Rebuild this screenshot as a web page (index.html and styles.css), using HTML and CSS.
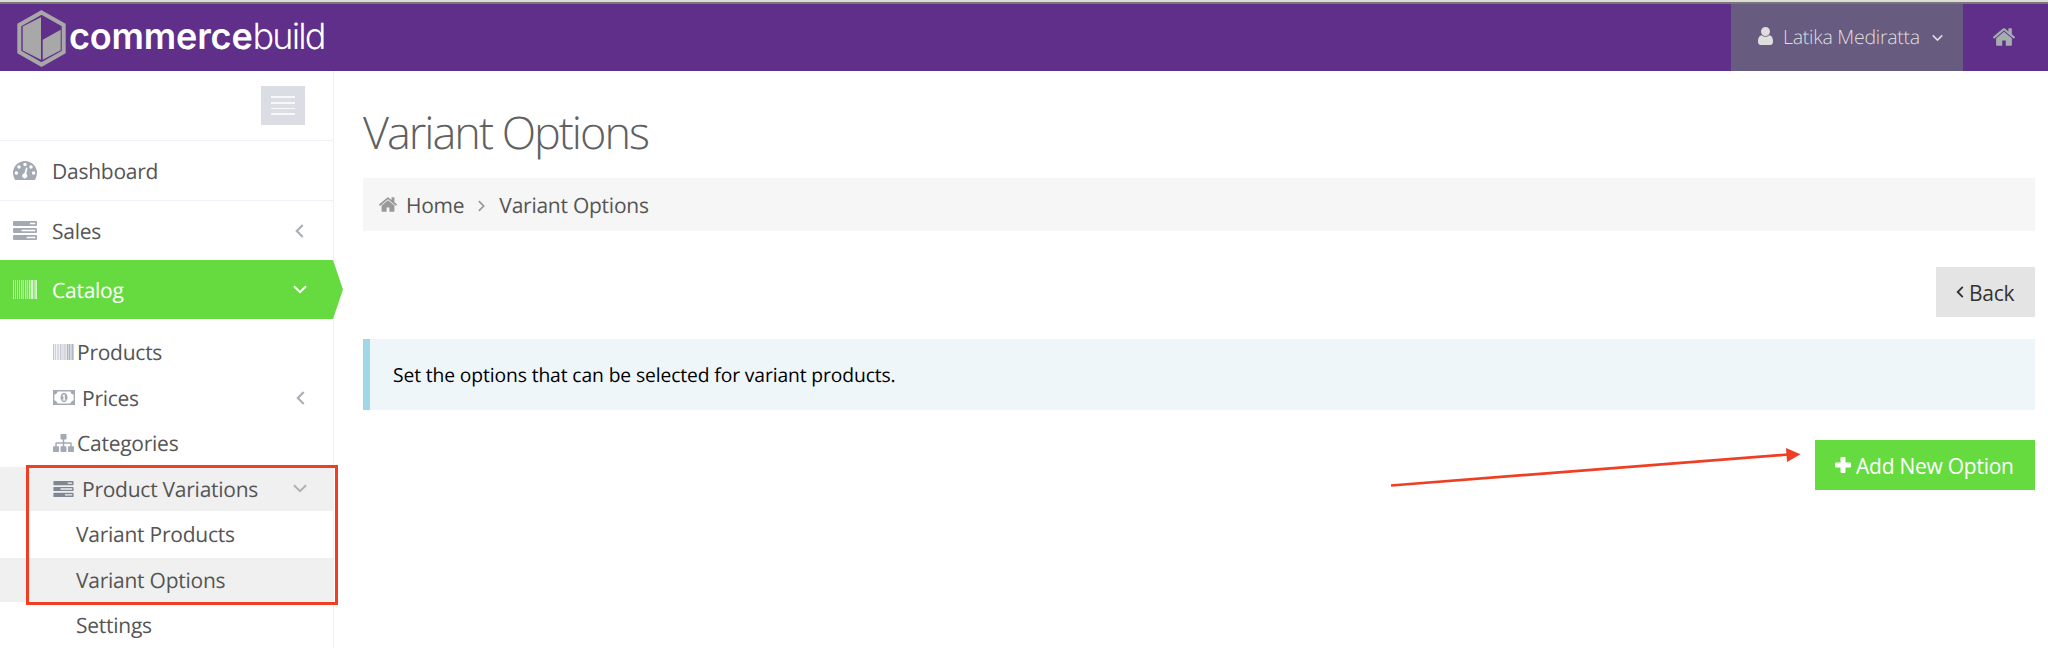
FILE: index.html
```
<!DOCTYPE html>
<html lang="en">
<head>
<meta charset="utf-8">
<title>Variant Options</title>
<link rel="stylesheet" href="styles.css">
</head>
<body>
<svg class="defs" width="0" height="0">
  <symbol id="home" viewBox="26 253 1612 1283"><path d="M1408 992v480q0 26-19 45t-45 19h-384v-384h-256v384h-384q-26 0-45-19t-19-45v-480q0-1 .5-3t.5-3l575-474 575 474q1 2 1 6zm223-69l-62 74q-8 9-21 11h-3q-13 0-21-7l-692-577-692 577q-12 8-24 7-13-2-21-11l-62-74q-8-10-7-23.500t11-21.500l719-599q32-26 76-26t76 26l244 204v-195q0-14 9-23t23-9h192q14 0 23 9t9 23v408l219 182q10 8 11 21.500t-7 23.500z"/></symbol>
  <symbol id="user" viewBox="256 128 1280 1536"><path d="M1536 1399q0 109-62.500 187t-150.500 78h-854q-88 0-150.500-78t-62.500-187q0-85 8.500-160.500t31.500-152 58.500-131 94-89 134.500-34.500q131 128 313 128t313-128q76 0 134.500 34.500t94 89 58.500 131 31.500 152 8.500 160.500zm-256-887q0 159-112.500 271.500t-271.500 112.500-271.500-112.500-112.500-271.500 112.500-271.500 271.500-112.500 271.500 112.500 112.500 271.500z"/></symbol>
  <symbol id="tasks" viewBox="0 0 24 19"><path fill-rule="evenodd" d="M1 0h22q1 0 1 1v3q0 1-1 1H1q-1 0-1-1V1q0-1 1-1zM17 1.700v1.600h5.300V1.700zM1 7h22q1 0 1 1v3q0 1-1 1H1q-1 0-1-1V8q0-1 1-1zM8.500 8.700v1.600h13.800V8.700zM1 14h22q1 0 1 1v3q0 1-1 1H1q-1 0-1-1v-3q0-1 1-1zM13.700 15.700v1.600h8.600v-1.600z"/></symbol>
  <symbol id="barcode" viewBox="0 0 24 19"><path d="M0 0h1v19H0zM2 0h.6v19H2z"/><path opacity=".7" d="M4 0h1v19H4zM6 0h1v19H6zM8 0h1.400v19H8zM10 0h.8v19h-.8zM12 0h1.400v19H12zM14.200 0h1v19h-1z"/><path opacity=".9" d="M16 0h1.400v19H16zM18 0h2v19h-2zM20.600 0h1v19h-1zM22.200 0H24v19h-1.800z"/></symbol>
  <symbol id="gauge" viewBox="0 0 24 19"><path fill-rule="evenodd" d="M12 0a12 12 0 0 1 12 12q0 3.500-1.800 6.500-.3.500-.9.500H2.700q-.6 0-.9-.5Q0 15.500 0 12A12 12 0 0 1 12 0zM3.400 10.300a1.700 1.700 0 1 0 0 3.400 1.700 1.700 0 0 0 0-3.400zM6 4.300a1.700 1.700 0 1 0 0 3.400 1.700 1.700 0 0 0 0-3.400zM12 1.800a1.700 1.700 0 1 0 0 3.400 1.700 1.700 0 0 0 0-3.400zM18 4.300a1.700 1.700 0 1 0 0 3.400 1.700 1.700 0 0 0 0-3.400zM20.600 10.300a1.700 1.700 0 1 0 0 3.400 1.700 1.700 0 0 0 0-3.400zM13 6.800L11.400 12.200A2.600 2.600 0 1 0 13.300 12.700L14.500 7.200Q14.200 6.200 13 6.800z"/></symbol>
  <symbol id="money" viewBox="0 0 22 15"><path fill-rule="evenodd" d="M0 0h22v15H0zM4.400 1.400Q4.200 4.200 1.400 4.600v5.800q2.800.4 3 3.200h13.200q.2-2.800 3-3.200V4.600q-2.800-.4-3-3.200z"/><path fill-rule="evenodd" d="M11 2.800c2.300 0 3.500 2.200 3.500 4.700s-1.200 4.700-3.500 4.700-3.500-2.200-3.500-4.700S8.700 2.800 11 2.800zM10.700 4.400L9.200 5.700l.6.700.6-.4v3.500h-1v1h3.300v-1h-.9V4.400z"/></symbol>
  <symbol id="sitemap" viewBox="0 0 21 18"><path d="M8.300 0h4.400q.8 0 .8.800v3.900q0 .8-.8.800h-1.400v2.800h6.400q1 0 1 1v2.900h1.500q.8 0 .8.800v4.200q0 .8-.8.800h-4.400q-.8 0-.8-.8V13q0-.8.800-.8h1.500V9.700h-6v2.500h1.400q.8 0 .8.800v4.200q0 .8-.8.800H8.300q-.8 0-.8-.8V13q0-.8.8-.8h1.400V9.700h-6v2.500h1.500q.8 0 .8.800v4.200q0 .8-.8.800H.8q-.8 0-.8-.8V13q0-.8.8-.8h1.500V9.300q0-1 1-1h6.400V5.500H8.300q-.8 0-.8-.8V.8q0-.8.8-.8z"/></symbol>
  <symbol id="left" viewBox="0 0 8 13"><path class="line" d="M7 1L1.500 6.500 7 12"/></symbol>
  <symbol id="right" viewBox="0 0 8 13"><path class="line" d="M1 1l5.500 5.500L1 12"/></symbol>
  <symbol id="down" viewBox="0 0 14 9"><path class="line" d="M1 1.200l6 6 6-6"/></symbol>
  <symbol id="plus" viewBox="0 0 16 16"><path d="M6.500 0h3q1 0 1 1v4.500H15q1 0 1 1v3q0 1-1 1h-4.500V15q0 1-1 1h-3q-1 0-1-1v-4.500H1q-1 0-1-1v-3q0-1 1-1h4.500V1q0-1 1-1z"/></symbol>
</svg>

<header class="topbar">
  <a class="brand">
    <svg class="brand-mark" viewBox="0 0 49 57"><path class="brand-frame" d="M24.500 2.400L46.700 15v27L24.500 54.600 2.300 42V15z"/><path d="M5.700 16.500L24 7.200v42.600L5.700 40.500zM25.700 29.800l18-10v20.400l-18 9.600z"/></svg>
    <span class="brand-text"><b>commerce</b><span>build</span></span>
  </a>
  <div class="user">
    <svg class="user-icon"><use href="#user"/></svg>
    <span class="user-name">Latika Mediratta</span>
    <svg class="user-caret"><use href="#down"/></svg>
  </div>
  <a class="home-link"><svg><use href="#home"/></svg></a>
</header>

<div class="page">
  <nav class="sidebar">
    <div class="toggle-row"><button class="toggle"><i></i><i></i><i></i><i></i></button></div>
    <a class="item"><svg class="icon"><use href="#gauge"/></svg><span>Dashboard</span></a>
    <a class="item"><svg class="icon"><use href="#tasks"/></svg><span>Sales</span><svg class="arrow-left"><use href="#left"/></svg></a>
    <a class="item active"><svg class="icon"><use href="#barcode"/></svg><span>Catalog</span><svg class="arrow-down"><use href="#down"/></svg></a>
    <div class="submenu">
      <a class="sub tight"><svg class="icon barcode"><use href="#barcode"/></svg><span>Products</span></a>
      <a class="sub"><svg class="icon money"><use href="#money"/></svg><span>Prices</span><svg class="arrow-left"><use href="#left"/></svg></a>
      <a class="sub tight"><svg class="icon sitemap"><use href="#sitemap"/></svg><span>Categories</span></a>
      <a class="sub open"><svg class="icon"><use href="#tasks"/></svg><span>Product Variations</span><svg class="arrow-down"><use href="#down"/></svg></a>
      <a class="sub leaf"><span>Variant Products</span></a>
      <a class="sub leaf open"><span>Variant Options</span></a>
      <a class="sub leaf"><span>Settings</span></a>
    </div>
  </nav>
  <main class="content">
    <h1>Variant Options</h1>
    <div class="crumbs"><svg class="crumb-home"><use href="#home"/></svg><span>Home</span><svg class="crumb-sep"><use href="#right"/></svg><span>Variant Options</span></div>
    <div class="actions"><button class="btn back"><svg><use href="#left"/></svg><span>Back</span></button></div>
    <div class="note"><span>Set the options that can be selected for variant products.</span></div>
    <div class="actions"><button class="btn add"><svg><use href="#plus"/></svg><span>Add New Option</span></button></div>
  </main>
</div>

<div class="highlight"></div>
<svg class="pointer" viewBox="0 0 412 42"><path class="pointer-line" d="M1 37.500L398 6.500"/><path d="M396 0l14.500 6.200L397 14z"/></svg>
</body>
</html>
```
FILE: styles.css
```
* { box-sizing: border-box; }
body {
  margin: 0;
  height: 648px;
  overflow: hidden;
  position: relative;
  background: #fff;
  color: #555;
  font: 21px/28px "Open Sans", "Noto Sans", sans-serif;
  letter-spacing: -.25px;
  text-rendering: geometricPrecision;
}
svg { display: block; fill: currentColor; flex: none; }
.defs { position: absolute; }
.line { fill: none; stroke: currentColor; stroke-width: 2; }
span { white-space: nowrap; }
button { border: 0; padding: 0; font: inherit; letter-spacing: inherit; color: inherit; }

.topbar {
  display: flex;
  height: 71px;
  border-top: 4px solid #777;
  background: #5f2f8a;
  border-image: linear-gradient(#dcdcd8 0 1.500px, #777 2px) 4 0 0 0;
}
.brand { display: flex; padding: 6px 0 0 17px; color: #a8a8a8; }
.brand-mark { width: 49px; height: 57px; }
.brand-frame { fill: none; stroke: currentColor; stroke-width: 4; }
.brand-text { display: flex; margin: 1px 0 0 3px; color: #fff; font: 36px/50px Inter, sans-serif; }
.brand-text b { font-weight: 600; letter-spacing: -.15px; }
.brand-text span { font-weight: 300; letter-spacing: -1.900px; }
.user {
  display: flex;
  align-items: center;
  width: 232px;
  margin-left: auto;
  padding: 0 0 0 27px;
  background: #675b80;
  color: #dedede;
}
.user-icon { width: 15px; height: 18px; margin-bottom: 3px; }
.user-name { margin: 0 0 1px 10px; font-size: 19.500px; font-weight: 340; letter-spacing: -.25px; }
.user-caret { width: 11px; height: 8px; margin-left: 12px; }
.home-link { width: 85px; padding: 24px 0 0 30px; color: #a4adb0; }
.home-link svg { width: 22px; height: 18px; }

.page { display: flex; height: 577px; }
.sidebar { width: 334px; border-right: 1px solid #eff0f7; }
.toggle-row { display: flex; justify-content: flex-end; height: 70px; padding: 15px 28px 0 0; border-bottom: 1px solid #eef1f5; }
.toggle { display: flex; flex-direction: column; gap: 4px; width: 44px; height: 39px; padding: 10px; background: #dadde4; }
.toggle i { height: 2px; background: #f7f8fa; }
.item { display: flex; align-items: center; height: 60px; padding: 0 26px 0 13px; border-bottom: 1px solid #eef1f5; }
.item span, .sub span, .crumbs span, .btn span { padding-top: 2px; }
.item:nth-child(3) { height: 59px; border: 0; }
.item .icon { width: 24px; height: 19px; margin-right: 15px; }
.icon { color: #a3aab4; }
.arrow-left { width: 9px; height: 14px; margin: 0 3px 0 auto; color: #a9afb8; }
.arrow-down { width: 14px; height: 9px; margin-left: auto; color: #b0b0b0; }
.item.active {
  width: 343px;
  height: 59px;
  padding-right: 36px;
  border: 0;
  background: #66db40;
  color: #fff;
  clip-path: polygon(0 0, 333px 0, 343px 50%, 333px 100%, 0 100%);
}
.item.active .icon { color: #dff6d8; }
.item.active .arrow-down { color: #fff; }
.submenu { display: flex; flex-direction: column; gap: 1.500px; padding-top: 11px; }
.sub { display: flex; align-items: center; height: 44px; padding: 0 26px 0 53px; }
.sub .icon { width: 21px; height: 16px; margin-right: 8px; }
.sub .money { width: 22px; height: 15px; margin-right: 7px; }
.sub .sitemap { height: 18px; }
.sub.tight .icon { margin-right: 3px; }
.sub .arrow-left { margin-right: 2px; }
.sub.open { background: #f0f0f0; }
.sub.open .icon { color: #7f8794; }
.sub.leaf { padding-left: 76px; }

.content { flex: 1; padding: 0 13px 0 29px; }
h1 { margin: 34px 0 0; height: 73px; font-size: 45px; line-height: 56px; font-weight: 340; letter-spacing: -2px; color: #606060; }
.crumbs { display: flex; align-items: center; height: 53px; padding-left: 16px; background: #f6f6f6; }
.crumb-home { width: 18px; height: 15px; margin-right: 9px; color: #999; }
.crumb-sep { width: 7px; height: 12px; margin: 2px 14px 0 14px; color: #999; }
.actions { display: flex; justify-content: flex-end; }
.btn { display: flex; align-items: center; height: 50px; }
.back { width: 99px; margin-top: 36px; padding-left: 20px; background: #e4e4e4; color: #333; }
.back svg { width: 8px; height: 12px; margin-right: 5px; }
.note { display: flex; align-items: center; height: 71px; margin: 22px 0 30px; padding-left: 23px; border-left: 7px solid #a0d7e7; background: #eef6fa; color: #000; font-size: 19.300px; letter-spacing: -.12px; }
.add { width: 220px; padding-left: 20px; background: #66db40; color: #fff; }
.add svg { width: 16px; height: 16px; margin-right: 5px; }

.highlight { position: absolute; left: 26px; top: 465px; width: 312px; height: 140px; border: 3px solid #f03e23; }
.pointer { position: absolute; left: 1390px; top: 448px; width: 412px; height: 42px; color: #ee3f24; }
.pointer-line { stroke: currentColor; stroke-width: 2.700; }
```
